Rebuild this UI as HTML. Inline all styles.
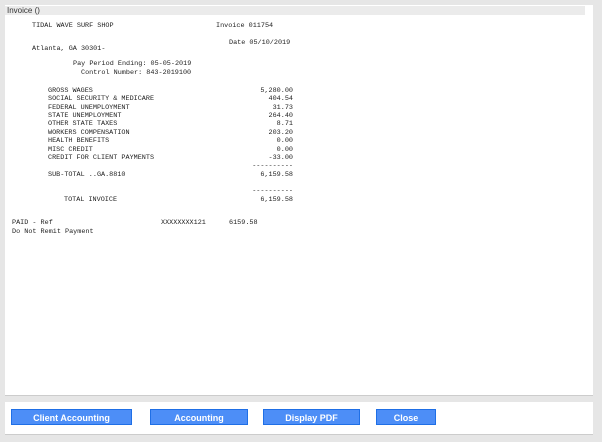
<!DOCTYPE html>
<html><head><style>
body{margin:0;width:602px;height:442px;background:#e6e6e6;position:relative;overflow:hidden;font-family:"Liberation Sans",sans-serif}
.p{position:absolute;background:#fff}
.hd{position:absolute;left:5px;top:6px;width:578px;height:9px;background:#ebebeb;font-size:8px;line-height:9px;color:#333;padding-left:2px}
.t{position:absolute;margin-top:2px;font-family:"Liberation Mono",monospace;font-size:6.8px;line-height:8px;color:#222;white-space:pre}
.b{position:absolute;top:409px;height:16px;background:#4d8ef7;border:1px solid #1f6fe6;color:#fff;font-weight:bold;font-size:9px;line-height:16px;text-align:center;box-sizing:border-box}
</style></head><body>
<div class="p" style="left:5px;top:5px;width:588px;height:390px;border-bottom:1px solid #ccc"></div>
<div class="hd">Invoice ()</div>
<div class="t" style="left:32px;top:20px">TIDAL WAVE SURF SHOP</div>
<div class="t" style="left:216px;top:20px">Invoice 011754</div>
<div class="t" style="left:229px;top:37px">Date 05/10/2019</div>
<div class="t" style="left:32px;top:43px">Atlanta, GA 30301-</div>
<div class="t" style="left:73px;top:58px">Pay Period Ending: 05-05-2019</div>
<div class="t" style="left:81px;top:67px">Control Number: 843-2019100</div>
<div class="t" style="left:48px;top:85px">GROSS WAGES</div><div class="t" style="right:309px;top:85px">5,280.00</div>
<div class="t" style="left:48px;top:93px">SOCIAL SECURITY &amp; MEDICARE</div><div class="t" style="right:309px;top:93px">404.54</div>
<div class="t" style="left:48px;top:102px">FEDERAL UNEMPLOYMENT</div><div class="t" style="right:309px;top:102px">31.73</div>
<div class="t" style="left:48px;top:110px">STATE UNEMPLOYMENT</div><div class="t" style="right:309px;top:110px">264.40</div>
<div class="t" style="left:48px;top:118px">OTHER STATE TAXES</div><div class="t" style="right:309px;top:118px">8.71</div>
<div class="t" style="left:48px;top:127px">WORKERS COMPENSATION</div><div class="t" style="right:309px;top:127px">203.20</div>
<div class="t" style="left:48px;top:135px">HEALTH BENEFITS</div><div class="t" style="right:309px;top:135px">0.00</div>
<div class="t" style="left:48px;top:144px">MISC CREDIT</div><div class="t" style="right:309px;top:144px">0.00</div>
<div class="t" style="left:48px;top:152px">CREDIT FOR CLIENT PAYMENTS</div><div class="t" style="right:309px;top:152px">-33.00</div>
<div class="t" style="right:309px;top:160px">----------</div>
<div class="t" style="left:48px;top:169px">SUB-TOTAL ..GA.8810</div><div class="t" style="right:309px;top:169px">6,159.58</div>
<div class="t" style="right:309px;top:185px">----------</div>
<div class="t" style="left:64px;top:194px">TOTAL INVOICE</div><div class="t" style="right:309px;top:194px">6,159.58</div>
<div class="t" style="left:12px;top:217px">PAID - Ref</div>
<div class="t" style="left:161px;top:217px">XXXXXXXX121</div>
<div class="t" style="left:229px;top:217px">6159.58</div>
<div class="t" style="left:12px;top:226px">Do Not Remit Payment</div>
<div class="p" style="left:5px;top:402px;width:588px;height:32px;border-bottom:1px solid #ccc"></div>
<div class="b" style="left:11px;width:121px">Client Accounting</div>
<div class="b" style="left:150px;width:98px">Accounting</div>
<div class="b" style="left:263px;width:97px">Display PDF</div>
<div class="b" style="left:376px;width:60px">Close</div>
</body></html>
